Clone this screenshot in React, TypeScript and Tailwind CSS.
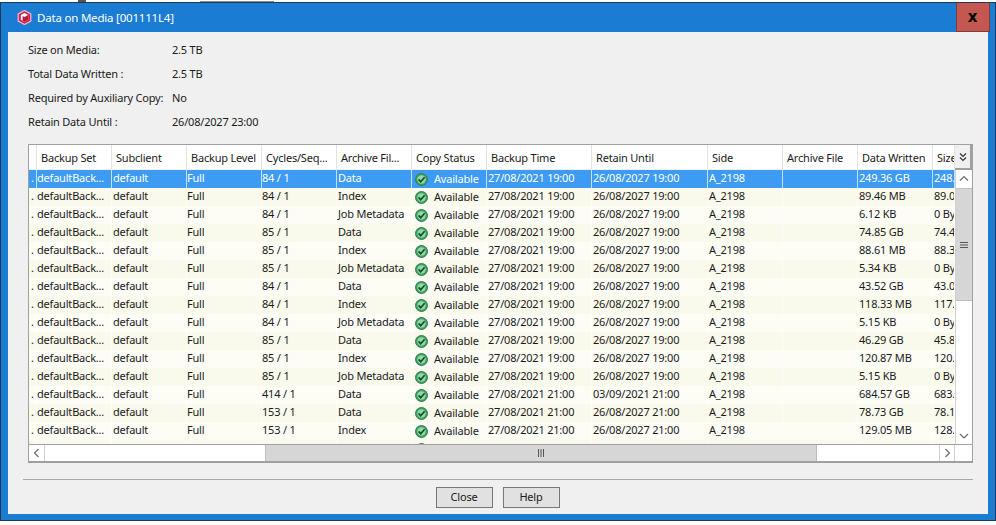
const cols = [
  { t: "", w: 8 },
  { t: "Backup Set", w: 75 },
  { t: "Subclient", w: 75 },
  { t: "Backup Level", w: 75 },
  { t: "Cycles/Seq...", w: 75 },
  { t: "Archive Fil...", w: 75 },
  { t: "Copy Status", w: 75 },
  { t: "Backup Time", w: 105 },
  { t: "Retain Until", w: 116 },
  { t: "Side", w: 75 },
  { t: "Archive File", w: 75 },
  { t: "Data Written", w: 75 },
  { t: "Size", w: 22 },
];

const rows = [
  ["84 / 1", "Data", "27/08/2021 19:00", "26/08/2027 19:00", "249.36 GB", "248."],
  ["84 / 1", "Index", "27/08/2021 19:00", "26/08/2027 19:00", "89.46 MB", "89.0"],
  ["84 / 1", "Job Metadata", "27/08/2021 19:00", "26/08/2027 19:00", "6.12 KB", "0 By"],
  ["85 / 1", "Data", "27/08/2021 19:00", "26/08/2027 19:00", "74.85 GB", "74.4"],
  ["85 / 1", "Index", "27/08/2021 19:00", "26/08/2027 19:00", "88.61 MB", "88.3"],
  ["85 / 1", "Job Metadata", "27/08/2021 19:00", "26/08/2027 19:00", "5.34 KB", "0 By"],
  ["84 / 1", "Data", "27/08/2021 19:00", "26/08/2027 19:00", "43.52 GB", "43.0"],
  ["84 / 1", "Index", "27/08/2021 19:00", "26/08/2027 19:00", "118.33 MB", "117."],
  ["84 / 1", "Job Metadata", "27/08/2021 19:00", "26/08/2027 19:00", "5.15 KB", "0 By"],
  ["85 / 1", "Data", "27/08/2021 19:00", "26/08/2027 19:00", "46.29 GB", "45.8"],
  ["85 / 1", "Index", "27/08/2021 19:00", "26/08/2027 19:00", "120.87 MB", "120."],
  ["85 / 1", "Job Metadata", "27/08/2021 19:00", "26/08/2027 19:00", "5.15 KB", "0 By"],
  ["414 / 1", "Data", "27/08/2021 21:00", "03/09/2021 21:00", "684.57 GB", "683."],
  ["153 / 1", "Data", "27/08/2021 21:00", "26/08/2027 21:00", "78.73 GB", "78.1"],
  ["153 / 1", "Index", "27/08/2021 21:00", "26/08/2027 21:00", "129.05 MB", "128."],
  ["417 / 1", "Data", "27/08/2021 21:00", "03/09/2021 21:00", "117.68 GB", "116."],
];

const info = [
  ["Size on Media:", "2.5 TB"],
  ["Total Data Written :", "2.5 TB"],
  ["Required by Auxiliary Copy:", "No"],
  ["Retain Data Until :", "26/08/2027 23:00"],
];

function Check() {
  return (
    <svg width="13" height="13" viewBox="0 0 13 13" className="shrink-0">
      <circle cx="6.5" cy="6.5" r="6" fill="#3f9f63" stroke="#35804f" strokeWidth="1" />
      <circle cx="6.5" cy="6.5" r="4.2" fill="#8fdba3" />
      <path d="M3.6 6.4 L5.7 8.7 L9.6 4.3" fill="none" stroke="#17492c" strokeWidth="1.7" />
    </svg>
  );
}

function Logo() {
  return (
    <svg width="15" height="15" viewBox="0 0 15 15">
      <path d="M7.5 0.5 L13.8 3.9 V11.1 L7.5 14.5 L1.2 11.1 V3.9 Z" fill="#d6204a" stroke="#f5b8c8" strokeWidth="1.2" />
      <path d="M3.8 5 L7.5 3 L11.2 5 V9.8 L7.5 11.9 L3.8 9.8 Z" fill="#fff" />
      <path d="M5.6 6 L7.5 7.1 L11.2 5 V9.8 L7.5 11.9 L5.6 10.8 Z" fill="#b51a40" />
    </svg>
  );
}

function Chevron({ dir }: { dir: "up" | "down" | "left" | "right" }) {
  const d = {
    up: "M2 7.5 L6 3.5 L10 7.5",
    down: "M2 4 L6 8 L10 4",
    left: "M7.5 2 L3.5 6 L7.5 10",
    right: "M4.5 2 L8.5 6 L4.5 10",
  }[dir];
  return (
    <svg width="12" height="12" viewBox="0 0 12 12">
      <path d={d} fill="none" stroke="#6b6b6b" strokeWidth="1.2" />
    </svg>
  );
}

function Cell({ w, children, className = "" }: { w: number; children?: React.ReactNode; className?: string }) {
  return (
    <div style={{ width: w }} className={`shrink-0 h-full pb-[1px] flex items-center overflow-hidden whitespace-nowrap border-r ${className}`}>
      {children}
    </div>
  );
}

export default function App() {
  return (
    <div className="relative w-[996px] h-[525px] bg-white overflow-hidden flex flex-col text-[11px] tracking-[-0.2px] text-[#1a1a1a] font-['Noto_Sans','Liberation_Sans',sans-serif]">
      <div className="h-[2px] flex shrink-0 bg-white">
        <div className="w-[78px]" />
        <div className="w-[8px] bg-[#555]" />
        <div className="w-[114px]" />
        <div className="w-[74px] border-b border-[#888]" />
      </div>
      <div className="w-[996px] h-[519px] shrink-0 border border-[#1e3a52] bg-[#1b7cd3] flex flex-col">
        <div className="h-[29px] shrink-0 flex items-stretch">
          <div className="flex-1 flex items-center pl-[16px] gap-[5px]">
            <Logo />
            <span className="text-white text-[11.5px] tracking-[-0.2px]">Data on Media [001111L4]</span>
          </div>
          <div className="w-[34px] mr-[5px] bg-[#c4574f] border-b border-x border-[#7a3d3a] flex items-center justify-center text-black font-bold text-[15px] leading-none pr-[1px] font-['DejaVu_Sans',sans-serif]">x</div>
        </div>
        <div className="flex-1 mx-[7px] mb-[6px] bg-[#f0f0f0] flex flex-col">
          <div className="pl-[20px] pt-[6px] h-[112px] shrink-0">
            {info.map(([a, b]) => (
              <div key={a} className="h-[24px] flex items-center whitespace-nowrap">
                <span className="w-[144px] shrink-0">{a}</span>
                <span>{b}</span>
              </div>
            ))}
          </div>
          <div className="mx-[20px] w-[945px] h-[319px] shrink-0 border border-[#a0a0a0] border-b-2 bg-white flex flex-col">
            <div className="h-[25px] shrink-0 flex items-stretch">
              <div className="w-[926px] overflow-hidden flex bg-[#f0f0f0]">
                {cols.map((c, i) => (
                  <div key={i} style={{ width: c.w }} className="shrink-0 pl-[4px] pt-[2px] h-[24px] bg-white border-r border-[#e3e3e3] flex items-center overflow-hidden whitespace-nowrap">
                    {c.t}
                  </div>
                ))}
              </div>
              <div className="flex-1 bg-[#f0f0f0] border-r-2 border-b-2 border-[#a0a0a0] flex items-center justify-center">
                <svg width="10" height="12" viewBox="0 0 10 12">
                  <path d="M2 2.5 L5 5.5 L8 2.5 M2 6.5 L5 9.5 L8 6.5" fill="none" stroke="#333" strokeWidth="1.2" />
                </svg>
              </div>
            </div>
            <div className="flex-1 min-h-0 flex">
              <div className="w-[926px] overflow-hidden">
                {rows.map((r, i) => {
                  const sel = i === 0;
                  const bg = sel ? "bg-[#3d9bf3] text-white" : i % 2 === 0 ? "bg-[#fdfdf6]" : "bg-[#fafaec]";
                  const vals = [".", "defaultBack...", "default", "Full", r[0], r[1], "", r[2], r[3], "A_2198", "", r[4], r[5]];
                  return (
                    <div key={i} className={`h-[18px] flex ${bg}`}>
                      {vals.map((v, j) => (
                        <Cell
                          key={j}
                          w={cols[j].w}
                          className={`${j === 0 ? "pl-[2px]" : j === 1 || j === 3 || j === 4 ? "pl-0" : "pl-[1px]"} ${sel ? "border-white/70" : "border-white/60"}`}
                        >
                          {j === 6 ? (
                            <span className="flex items-center gap-[6px] pl-[2px] pt-[2px]">
                              <Check />
                              <span>Available</span>
                            </span>
                          ) : (
                            v
                          )}
                        </Cell>
                      ))}
                    </div>
                  );
                })}
              </div>
              <div className="flex-1 bg-white border-l border-[#d0d0d0] flex flex-col">
                <div className="h-[18px] flex items-center justify-center"><Chevron dir="up" /></div>
                <div className="h-[113px] bg-[#d6d6d6] border-y border-[#c0c0c0] flex items-center justify-center">
                  <svg width="8" height="8" viewBox="0 0 8 8"><path d="M0 1.5 H8 M0 4 H8 M0 6.5 H8" stroke="#555" strokeWidth="1" /></svg>
                </div>
                <div className="flex-1" />
                <div className="h-[17px] flex items-center justify-center"><Chevron dir="down" /></div>
              </div>
            </div>
            <div className="h-[17px] shrink-0 border-t border-[#a0a0a0] flex bg-white">
              <div className="w-[16px] border-r border-[#d0d0d0] flex items-center justify-center"><Chevron dir="left" /></div>
              <div className="w-[220px]" />
              <div className="w-[552px] bg-[#d6d6d6] border-x border-[#c0c0c0] flex items-center justify-center">
                <svg width="8" height="8" viewBox="0 0 8 8"><path d="M1.5 0 V8 M4 0 V8 M6.5 0 V8" stroke="#555" strokeWidth="1" /></svg>
              </div>
              <div className="w-[122px]" />
              <div className="w-[16px] border-x border-[#d0d0d0] flex items-center justify-center"><Chevron dir="right" /></div>
            </div>
          </div>
          <div className="mx-[15px] mt-[16px] h-[1px] bg-[#a9a9a9] shrink-0" />
          <div className="flex-1 flex items-start justify-center gap-[10px] pt-[7px] pr-[1px]">
            <div className="w-[57px] h-[21px] bg-[#e1e1e1] border border-[#777] flex items-center justify-center">Close</div>
            <div className="w-[57px] h-[21px] bg-[#e1e1e1] border border-[#777] flex items-center justify-center">Help</div>
          </div>
        </div>
      </div>
    </div>
  );
}
